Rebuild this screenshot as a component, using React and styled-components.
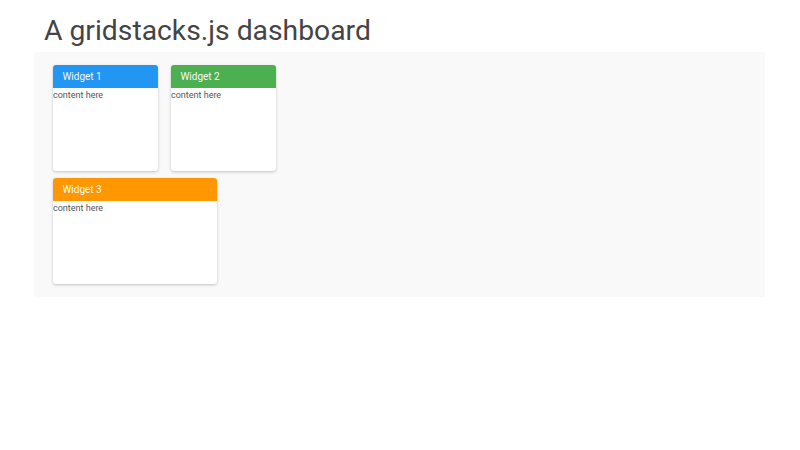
import React from "react";
import styled, { createGlobalStyle } from "styled-components";

const Global = createGlobalStyle`
  html, body { margin: 0; padding: 0; background: #fff; }
  body { font-family: Roboto, "Noto Sans", sans-serif; }
`;

const Page = styled.div`
  padding: 0 35px 0 34px;
`;

const Title = styled.h1`
  margin: 0;
  padding: 14px 0 0 10px;
  height: 38px;
  font-size: 28.3px;
  font-weight: 400;
  line-height: 34px;
  color: #444;
`;

const Grid = styled.div`
  background: #f9f9f9;
  display: grid;
  grid-template-columns: repeat(12, 46px);
  grid-auto-rows: 106px;
  column-gap: 13px;
  row-gap: 7px;
  padding: 13px 19px 13px 19px;
`;

const Card = styled.div`
  grid-column: ${(p) => (p.$start ? `${p.$start} / span ${p.$w}` : `span ${p.$w}`)};
  background: #fff;
  border-radius: 3px;
  box-shadow: 0 1px 3px rgba(0, 0, 0, 0.22);
  display: flex;
  flex-direction: column;
  overflow: hidden;
`;

const Header = styled.div`
  height: 23px;
  background: ${(p) => p.$color};
  color: #f4f8fc;
  font-size: 10px;
  line-height: 23px;
  padding-left: 9.5px;
`;

const Body = styled.div`
  font-size: 9px;
  color: #555;
  padding-top: 2px;
`;

const widgets = [
  { name: "Widget 1", color: "#2196F3", w: 2 },
  { name: "Widget 2", color: "#4CAF50", w: 2 },
  { name: "Widget 3", color: "#FF9800", w: 3, start: 1 },
];

export default function App() {
  return (
    <>
      <Global />
      <Page>
        <Title>A gridstacks.js dashboard</Title>
        <Grid>
          {widgets.map((w) => (
            <Card key={w.name} $w={w.w} $start={w.start}>
              <Header $color={w.color}>{w.name}</Header>
              <Body>content here</Body>
            </Card>
          ))}
        </Grid>
      </Page>
    </>
  );
}
